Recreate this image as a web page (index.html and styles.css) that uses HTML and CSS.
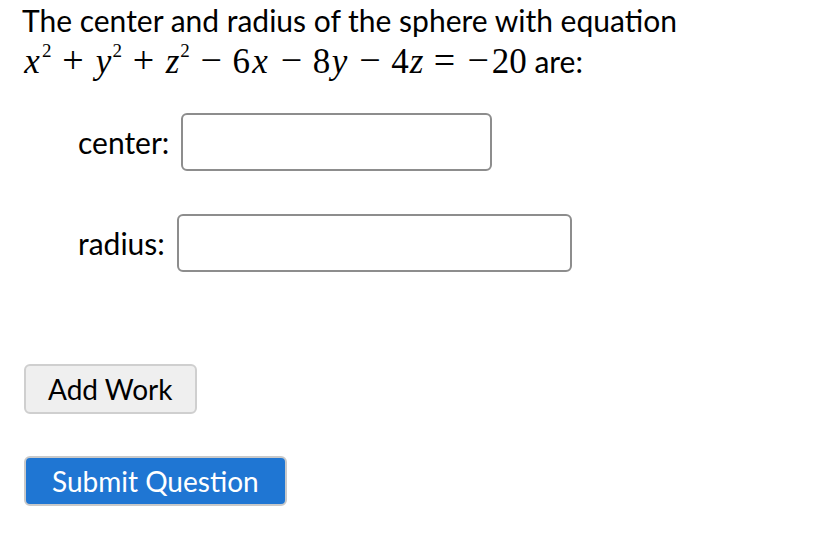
FILE: index.html
```html
<!DOCTYPE html>
<html lang="en">
<head>
    <meta charset="UTF-8">
    <meta name="viewport" content="width=device-width, initial-scale=1.0">
    <title>Question</title>
    <link rel="stylesheet" href="styles.css">
</head>
<body>
    <div class="question">
        <p class="prompt">
            The center and radius of the sphere with equation
            <span class="math"><i class="mx">x</i><sup>2</sup><span class="op">+</span><i class="my">y</i><sup>2</sup><span class="op">+</span><i class="mz">z</i><sup>2</sup><span class="op">&minus;</span><span class="mn">6</span><i class="mx">x</i><span class="op">&minus;</span><span class="mn">8</span><i class="my">y</i><span class="op">&minus;</span><span class="mn">4</span><i class="mz">z</i><span class="rel">=</span><span class="neg">&minus;</span><span class="mn">2</span><span class="mn">0</span></span> are:
        </p>

        <div class="answers">
            <div class="answer-row">
                <label for="center">center:</label>
                <input type="text" id="center" class="center-input">
            </div>
            <div class="answer-row">
                <label for="radius">radius:</label>
                <input type="text" id="radius" class="radius-input">
            </div>
        </div>

        <div class="actions">
            <button type="button" class="btn btn-work">Add Work</button>
            <button type="submit" class="btn btn-submit">Submit Question</button>
        </div>
    </div>
</body>
</html>
```

FILE: styles.css
```css
body {
    font-family: Lato, 'Noto Sans', sans-serif;
    color: #000;
    background: #fff;
    margin: 0;
    padding: 0 22px;
}

.prompt {
    font-size: 30px;
    line-height: 41px;
    margin: 0;
}

/* typeset equation, widths follow TeX metrics */
.math {
    font-family: 'Liberation Serif', 'DejaVu Serif', serif;
    font-size: 35px;
    line-height: 0;
    white-space: nowrap;
}

.math i,
.math .mn,
.math .op,
.math .rel,
.math .neg,
.math sup {
    display: inline-block;
    line-height: 0;
    text-align: center;
}

.math .mx { width: 0.572em; }
.math .my { width: 0.52em; }
.math .mz { width: 0.44em; }
.math .mn { width: 0.5em; }

.math sup {
    font-size: 19px;
    width: 0.5em;
    vertical-align: 16px;
    text-align: left;
}

.math .op,
.math .rel,
.math .neg {
    font-size: 38px;
}

.math .op { width: 1.127em; }
.math .rel { width: 1.06em; }
.math .neg { width: 0.716em; }

.answers {
    padding-left: 56px;
    margin-top: 31px;
}

.answer-row {
    display: flex;
    align-items: center;
    gap: 12px;
    margin-bottom: 43px;
}

label {
    font-size: 30px;
}

input {
    height: 58px;
    box-sizing: border-box;
    border: 2px solid #8d8d8d;
    border-radius: 6px;
    font-size: 24px;
    padding: 0 10px;
}

.center-input {
    width: 311px;
}

.radius-input {
    width: 395px;
}

.actions {
    display: flex;
    flex-direction: column;
    align-items: flex-start;
    gap: 42px;
    margin-top: 92px;
    padding-left: 2px;
}

.btn {
    font-family: inherit;
    font-size: 28px;
    height: 50px;
    border-radius: 6px;
    cursor: pointer;
}

.btn-work {
    padding: 0 22px;
    background-color: #efefef;
    border: 2px solid #cfcfcf;
    color: #000;
}

.btn-submit {
    padding: 0 26px;
    background-color: #1f76d3;
    border: 2px solid #c9c9c9;
    color: #fff;
}
```
